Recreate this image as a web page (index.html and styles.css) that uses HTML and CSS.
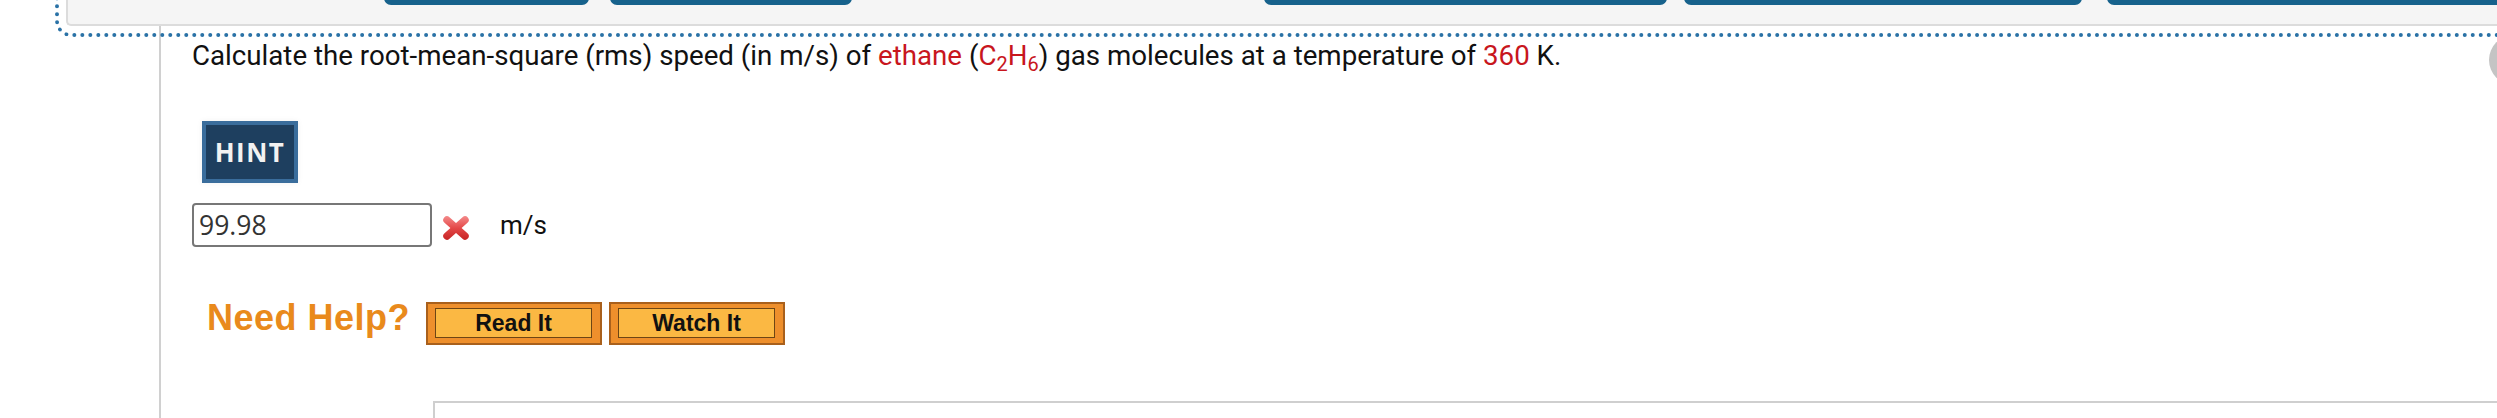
FILE: index.html
```html
<!DOCTYPE html>
<html lang="en">
<head>
<meta charset="utf-8">
<title>Question</title>
<link rel="stylesheet" href="styles.css">
</head>
<body>
<header class="header">
  <div class="tabs">
    <div class="tab t1"></div>
    <div class="tab t2"></div>
    <div class="tab t3"></div>
    <div class="tab t4"></div>
    <div class="tab t5"></div>
  </div>
</header>
<main class="main">
  <p class="question">Calculate the root-mean-square (rms) speed (in m/s) of <span class="red">ethane</span> (<span class="red">C<sub>2</sub>H<sub>6</sub></span>) gas molecules at a temperature of <span class="red">360</span> K.</p>
  <button class="hint" type="button">HINT</button>
  <div class="answer">
    <input class="answer-input" type="text" value="99.98">
    <svg class="wrong" width="30" height="28" viewBox="0 0 30 28" aria-hidden="true">
      <defs>
        <linearGradient id="xg" gradientUnits="userSpaceOnUse" x1="0" y1="2" x2="0" y2="26">
          <stop offset="0" stop-color="#f48a8a"/>
          <stop offset="0.5" stop-color="#e44848"/>
          <stop offset="1" stop-color="#c62424"/>
        </linearGradient>
      </defs>
      <line x1="6" y1="6" x2="24" y2="22" stroke="url(#xg)" stroke-width="7.5" stroke-linecap="round"/>
      <line x1="24" y1="6" x2="6" y2="22" stroke="url(#xg)" stroke-width="7.5" stroke-linecap="round"/>
    </svg>
    <span class="unit">m/s</span>
  </div>
  <div class="help">
    <span class="help-label">Need Help?</span>
    <button class="help-btn" type="button"><span class="help-btn-inner">Read It</span></button>
    <button class="help-btn" type="button"><span class="help-btn-inner">Watch It</span></button>
  </div>
  <div class="next-box"></div>
</main>
<div class="knob"></div>
</body>
</html>
```

FILE: styles.css
```css
html, body {
  margin: 0;
  padding: 0;
  overflow: hidden;
  background: #ffffff;
  height: 418px;
}

body {
  position: relative;
  font-family: Roboto, "Liberation Sans", sans-serif;
  color: #111;
}

.header {
  margin-left: 66px;
  margin-right: -60px;
  height: 24px;
  background: #f5f5f5;
  border-left: 2px solid #dcdcdc;
  border-bottom: 2px solid #dcdcdc;
  border-bottom-left-radius: 5px;
  outline: 4px dotted #2a72a6;
  outline-offset: 7px;
}

.tabs {
  display: flex;
  align-items: flex-start;
}

.tab {
  box-sizing: border-box;
  height: 16px;
  margin-top: -11px;
  border: 4px solid #17628c;
  border-bottom-width: 5px;
  border-radius: 0 0 7px 7px;
  background: #f5f5f5;
  flex: none;
}

.t1 { margin-left: 316px; width: 205px; }
.t2 { margin-left: 21px; width: 242px; }
.t3 { margin-left: 412px; width: 403px; }
.t4 { margin-left: 17px; width: 398px; }
.t5 { margin-left: 25px; width: 500px; }

.main {
  margin-left: 159px;
  border-left: 2px solid #d0d0d0;
  padding: 15px 0 0 31px;
  height: 400px;
}

.question {
  margin: 0;
  font-family: Roboto, sans-serif;
  font-size: 27.7px;
  line-height: 30px;
  color: #111;
}

.red {
  color: #c8161d;
}

.question sub {
  font-size: 0.72em;
  vertical-align: -0.3em;
  line-height: 0;
}

.hint {
  display: flex;
  align-items: center;
  justify-content: center;
  box-sizing: border-box;
  width: 96px;
  height: 62px;
  margin: 50px 0 0 10px;
  padding: 0;
  background: #1e3f5f;
  border: 4px solid #3a6d9c;
  color: #f2f2f2;
  font-family: "Open Sans", sans-serif;
  font-weight: 700;
  font-size: 26px;
  letter-spacing: 1.5px;
  box-shadow: 0 0 6px rgba(0, 0, 0, 0.06);
}

.answer {
  display: flex;
  align-items: center;
  margin-top: 20px;
  height: 44px;
}

.answer-input {
  box-sizing: border-box;
  width: 240px;
  height: 44px;
  margin: 0;
  padding: 0 5px;
  border: 2px solid #777;
  border-radius: 4px;
  font-family: "Open Sans", sans-serif;
  font-size: 26.5px;
  color: #333;
  background: #fff;
}

.wrong {
  margin: 6px 0 0 9px;
  flex: none;
}

.unit {
  margin-left: 29px;
  font-family: Roboto, sans-serif;
  font-size: 26px;
  color: #111;
}

.help {
  display: flex;
  align-items: flex-start;
  margin-top: 48px;
  padding-left: 15px;
}

.help-label {
  font-family: "Liberation Sans", Arial, sans-serif;
  font-weight: 700;
  font-size: 36px;
  line-height: 40px;
  letter-spacing: 0.5px;
  color: #e98a1c;
  margin: 3px 16px 0 0;
}

.help-btn {
  box-sizing: border-box;
  width: 176px;
  height: 43px;
  margin: 7px 7px 0 0;
  padding: 4px 8px 5px 7px;
  border: 2px solid #a9601c;
  background: #ee8f2c;
  display: flex;
  cursor: pointer;
}

.help-btn-inner {
  flex: 1;
  display: flex;
  align-items: center;
  justify-content: center;
  border: 1px solid #6e4514;
  background: #fbb843;
  font-family: "Liberation Sans", Arial, sans-serif;
  font-weight: 700;
  font-size: 23px;
  color: #111;
}

.next-box {
  margin: 56px 0 0 241px;
  width: 2200px;
  height: 60px;
  border: 2px solid #cfcfcf;
}

.knob {
  position: absolute;
  top: 35px;
  right: -42px;
  width: 50px;
  height: 50px;
  border-radius: 50%;
  background: #c4c4c4;
}
```
